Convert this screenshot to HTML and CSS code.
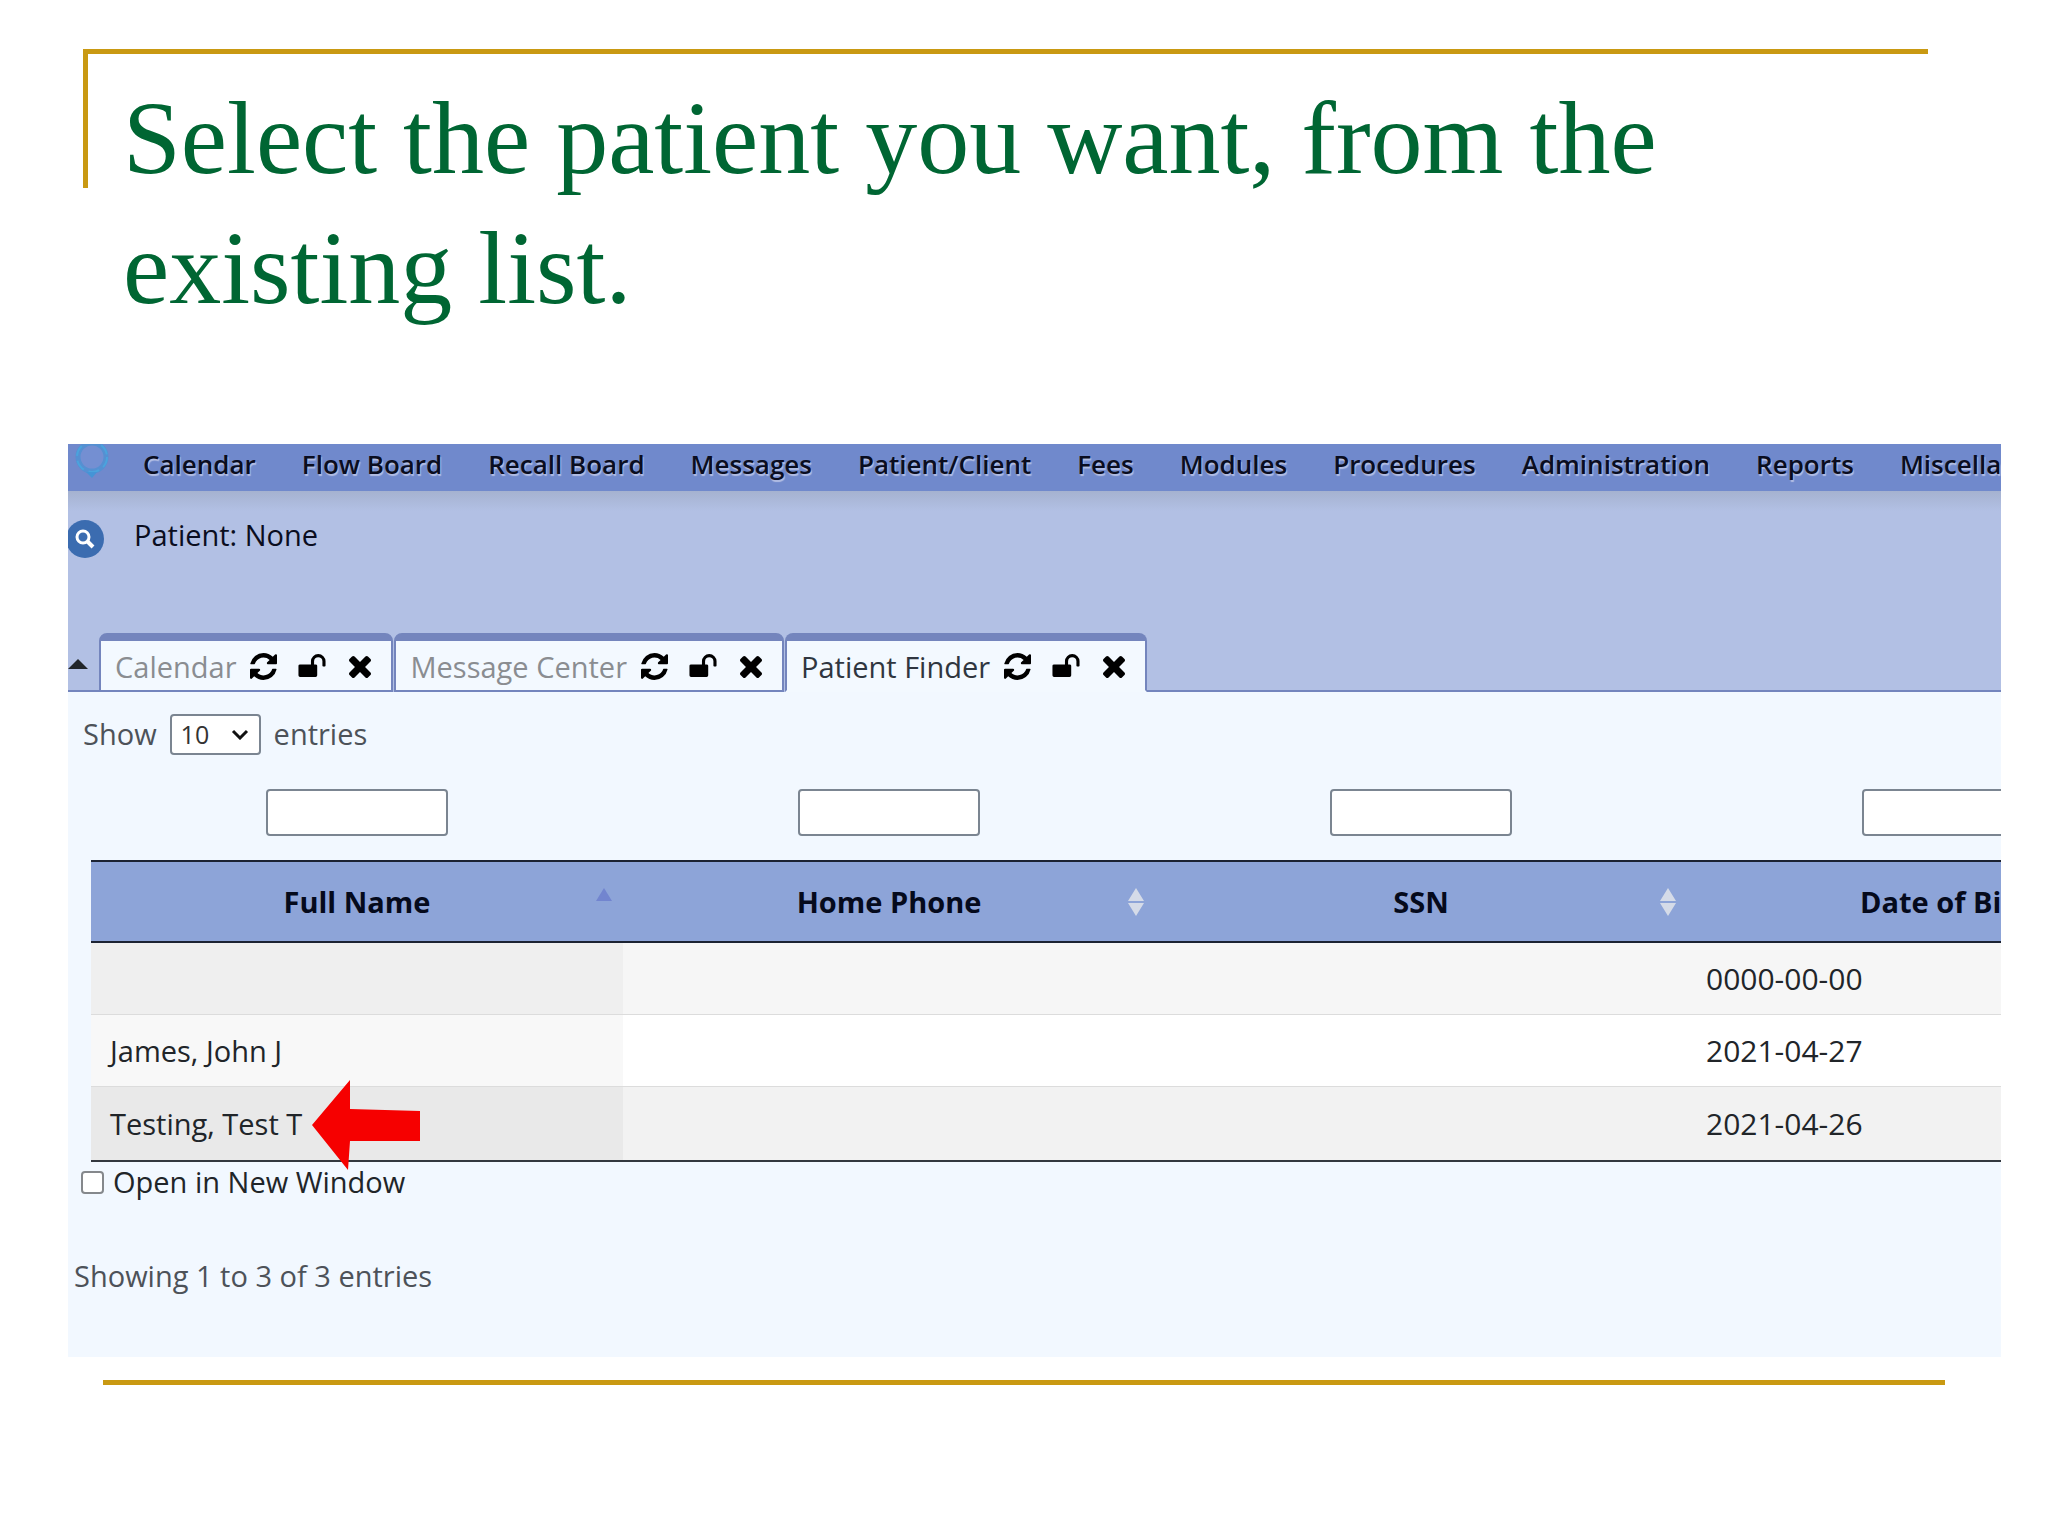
FILE: index.html
```html
<!DOCTYPE html>
<html lang="en">
<head>
<meta charset="utf-8">
<title>Select the patient you want</title>
<link rel="stylesheet" href="styles.css">
</head>
<body>
<svg class="sprite" aria-hidden="true">
  <symbol id="refresh" viewBox="0 0 1536 1536"><path d="M1511 928q0 5-1 7-64 268-268 434.500T764 1536q-146 0-282.500-55T238 1324l-129 129q-19 19-45 19t-45-19-19-45V960q0-26 19-45t45-19h448q26 0 45 19t19 45-19 45l-137 137q71 66 161 102t187 36q134 0 250-65t186-179q11-17 53-117 8-23 30-23h192q13 0 22.500 9.500t9.500 22.500zm25-800v448q0 26-19 45t-45 19h-448q-26 0-45-19t-19-45 19-45l138-138Q969 256 768 256q-134 0-250 65T332 500q-11 17-53 117-8 23-30 23H50q-13 0-22.500-9.500T18 608v-7q65-268 270-434.500T768 0q146 0 284 55.500T1297 212l130-129q19-19 45-19t45 19 19 45z"/></symbol>
  <symbol id="unlock" viewBox="0 0 1664 1536"><path d="M1664 448v256q0 26-19 45t-45 19h-64q-26 0-45-19t-19-45V448q0-106-75-181t-181-75-181 75-75 181v192h96q40 0 68 28t28 68v576q0 40-28 68t-68 28H96q-40 0-68-28t-28-68V736q0-40 28-68t68-28h672V448q0-185 131.500-316.500T1216 0t316.500 131.500T1664 448z"/></symbol>
  <symbol id="close" viewBox="0 0 1188 1188"><path d="M1188 956q0 40-28 68l-136 136q-28 28-68 28t-68-28L594 866l-294 294q-28 28-68 28t-68-28L28 1024Q0 996 0 956t28-68l294-294L28 300Q0 272 0 232t28-68L164 28q28-28 68-28t68 28l294 294L888 28q28-28 68-28t68 28l136 136q28 28 28 68t-28 68L866 594l294 294q28 28 28 68z"/></symbol>
  <symbol id="sort" viewBox="0 0 16 28"><path d="M8 0l8 13H0zM8 28L0 15h16z"/></symbol>
</svg>
<main class="slide">
  <header class="title">
    <div class="title-rule"></div>
    <h1>Select the patient you want, from the existing list.</h1>
  </header>

  <section class="app">
    <nav class="menu">
      <svg class="logo" viewBox="0 0 36 36"><circle cx="18" cy="13" r="14" fill="#748fd2" stroke="#5590d2" stroke-width="5"/><circle cx="18" cy="13" r="15" fill="none" stroke="#4ba3dd" stroke-width="2" stroke-dasharray="11 5"/><path d="M12 28l6 6 5-6z" fill="#4594d6"/></svg>
      <a href="#">Calendar</a><a href="#">Flow Board</a><a href="#">Recall Board</a><a href="#">Messages</a><a href="#">Patient/Client</a><a href="#">Fees</a><a href="#">Modules</a><a href="#">Procedures</a><a href="#">Administration</a><a href="#">Reports</a><a href="#">Miscellaneous</a>
    </nav>

    <div class="banner">
      <div class="patient">
        <button class="search" aria-label="Search"><svg viewBox="0 0 20 20"><circle cx="8" cy="8" r="6" fill="none" stroke="#fff" stroke-width="3"/><path d="M12 12l6 6" stroke="#fff" stroke-width="4"/></svg></button>
        <span>Patient: None</span>
      </div>
      <div class="tabs">
        <button class="collapse" aria-label="Collapse"><svg viewBox="0 0 20 10"><path d="M0 10L10 0l10 10z"/></svg></button>
        <div class="tab">
          <a href="#">Calendar</a>
          <button aria-label="Refresh"><svg class="i-refresh"><use href="#refresh"/></svg></button>
          <button aria-label="Unlock"><svg class="i-unlock"><use href="#unlock"/></svg></button>
          <button aria-label="Close"><svg class="i-close"><use href="#close"/></svg></button>
        </div>
        <div class="tab">
          <a href="#">Message Center</a>
          <button aria-label="Refresh"><svg class="i-refresh"><use href="#refresh"/></svg></button>
          <button aria-label="Unlock"><svg class="i-unlock"><use href="#unlock"/></svg></button>
          <button aria-label="Close"><svg class="i-close"><use href="#close"/></svg></button>
        </div>
        <div class="tab active">
          <a href="#">Patient Finder</a>
          <button aria-label="Refresh"><svg class="i-refresh"><use href="#refresh"/></svg></button>
          <button aria-label="Unlock"><svg class="i-unlock"><use href="#unlock"/></svg></button>
          <button aria-label="Close"><svg class="i-close"><use href="#close"/></svg></button>
        </div>
        <div class="tab-fill"></div>
      </div>
    </div>

    <div class="finder">
      <label class="length">Show
        <select><option>10</option><option>25</option><option>50</option></select>
        entries</label>
      <table>
        <thead>
          <tr class="filters">
            <td><input type="text" aria-label="Filter by full name"></td>
            <td><input type="text" aria-label="Filter by home phone"></td>
            <td><input type="text" aria-label="Filter by SSN"></td>
            <td><input type="text" aria-label="Filter by date of birth"></td>
          </tr>
          <tr class="heads">
            <th><div>Full Name<svg class="sorted" viewBox="0 0 16 28"><path d="M8 0l8 13H0z"/></svg></div></th>
            <th><div>Home Phone<svg><use href="#sort"/></svg></div></th>
            <th><div>SSN<svg><use href="#sort"/></svg></div></th>
            <th><div>Date of Birth<svg><use href="#sort"/></svg></div></th>
          </tr>
        </thead>
        <tbody>
          <tr><td></td><td></td><td></td><td>0000-00-00</td></tr>
          <tr><td>James, John J</td><td></td><td></td><td>2021-04-27</td></tr>
          <tr class="hover"><td><div class="pick">Testing, Test T<svg class="arrow" viewBox="0 0 108 90"><path d="M0 45L38 0v29l70 2v30H38l-2 29z"/></svg></div></td><td></td><td></td><td>2021-04-26</td></tr>
        </tbody>
      </table>
      <label class="newwin"><input type="checkbox">Open in New Window</label>
      <p class="info">Showing 1 to 3 of 3 entries</p>
    </div>
  </section>
  <hr class="foot-rule">
</main>
</body>
</html>
```
FILE: styles.css
```css
* { box-sizing: border-box; }
body {
  margin: 0;
  background: #fff;
  color: #212529;
  font: 29px/40px "Open Sans", "Noto Sans", sans-serif;
}
button { padding: 0; border: 0; background: none; color: inherit; }
svg { display: block; fill: currentColor; }
a { color: inherit; text-decoration: none; }
.sprite { position: absolute; width: 0; height: 0; }

.slide { padding: 49px 47px 0 68px; }

/* title block with its corner rule */
.title { display: grid; margin: 0 73px 0 15px; min-height: 395px; }
.title-rule {
  grid-area: 1 / 1;
  height: 139px;
  border-top: 5px solid #c99912;
  border-left: 5px solid #c99912;
}
.title h1 {
  grid-area: 1 / 1;
  margin: 0;
  padding: 24px 160px 0 40px;
  color: #006633;
  font: 400 104px/130px "Liberation Serif", serif;
}

.app { overflow: hidden; background: #f2f8ff; }

.menu {
  display: flex;
  gap: 46px;
  height: 47px;
  padding-left: 6px;
  background: #7089cc;
  color: #0a0d20;
  font-size: 26px;
  font-weight: 600;
  line-height: 40px;
  white-space: nowrap;
  text-shadow: 1px 2px 1px #b4bfe4;
}
.logo { flex: none; width: 36px; height: 36px; margin-right: -13px; }

.banner {
  background: linear-gradient(#a5b2d0, #b2c0e4 20px);
}
.patient { display: flex; gap: 30px; height: 142px; padding-top: 24px; color: #0a0d20; font-size: 29px; font-weight: 500; }
.search {
  width: 38px;
  height: 38px;
  margin: 5px 0 0 -2px;
  border-radius: 50%;
  background: #3b6cb0;
}
.search svg { width: 20px; height: 20px; margin: 0 auto; }

.tabs { display: flex; height: 59px; }
.collapse { width: 31px; border-bottom: 2px solid #7485bd; }
.collapse svg { width: 20px; height: 10px; margin-top: 4px; }
.tab {
  display: flex;
  align-items: center;
  padding: 2px 20px 0 14px;
  margin-right: 1px;
  border: 2px solid #7485bd;
  border-top-width: 8px;
  border-radius: 8px 8px 0 0;
  background: #f3f9ff;
  color: #8a8d91;
  white-space: nowrap;
}
.tab.active { border-bottom-color: #f3f9ff; color: #2f3640; margin-right: 0; }
.tab button { color: #000; }
.i-refresh { width: 27px; height: 27px; margin-left: 14px; }
.i-unlock { width: 30px; height: 25px; margin-left: 20px; }
.i-close { width: 22px; height: 22px; margin-left: 22px; }
.tab-fill { flex: 1; border-bottom: 2px solid #7485bd; }

.finder { height: 665px; }
.length {
  display: flex;
  align-items: center;
  gap: 13px;
  height: 84px;
  padding: 0 0 0 15px;
  color: #4d5259;
}
.length select {
  appearance: none;
  width: 91px;
  height: 41px;
  padding: 0 9px;
  border: 2px solid #7b8591;
  border-radius: 4px;
  background: #fff url("data:image/svg+xml,%3Csvg xmlns='http://www.w3.org/2000/svg' viewBox='0 0 18 11'%3E%3Cpath d='M2 2l7 7 7-7' fill='none' stroke='%23111' stroke-width='3'/%3E%3C/svg%3E") no-repeat right 10px center / 18px 11px;
  color: #333;
  font: 25px "Open Sans", sans-serif;
}

table {
  width: 2128px;
  margin-left: 23px;
  border-collapse: separate;
  border-spacing: 0;
  table-layout: fixed;
  border-bottom: 2px solid #33383f;
}
.filters td { height: 84px; padding: 0 0 11px; text-align: center; vertical-align: middle; background: none; border: 0; }
.filters input {
  display: block;
  width: 182px;
  height: 47px;
  margin: 0 auto;
  border: 2px solid #7b8591;
  border-radius: 4px;
  background: #fff;
  font: inherit;
}
.heads th {
  height: 83px;
  padding: 1px 11px 0 27px;
  border: solid #1c2333;
  border-width: 2px 0;
  background: #8da4d8;
  color: #050a1c;
  font-weight: 700;
}
.heads div { display: grid; grid-template-columns: 1fr auto; align-items: center; }
.heads svg { width: 16px; height: 28px; fill: #d5dbe8; }
.heads .sorted { fill: #7285cf; }
tbody td { height: 72px; padding: 0 19px; border-top: 1px solid #dcdcdc; background: #fff; font-size: 30px; }
tbody tr:first-child td { height: 71px; border-top: 0; background: #f6f6f6; }
tbody td:first-child { background: #f8f8f8; font-size: 29px; }
tbody tr:first-child td:first-child { background: #efefef; }
tbody .hover td { height: 74px; background: #f2f2f2; }
tbody .hover td:first-child { background: #e9e9e9; }
.pick { position: relative; width: max-content; }
.arrow { position: absolute; left: 202px; top: -24px; width: 108px; height: 90px; fill: #f60000; }

.newwin { display: flex; align-items: center; gap: 9px; padding-left: 13px; }
.newwin input {
  appearance: none;
  width: 23px;
  height: 23px;
  margin: 0;
  border: 2px solid #85888c;
  border-radius: 4px;
  background: #fff;
}
.info { margin: 54px 0 0 6px; color: #4d5259; }

.foot-rule {
  height: 5px;
  margin: 23px 56px 0 35px;
  border: 0;
  background: #c99912;
}
```
